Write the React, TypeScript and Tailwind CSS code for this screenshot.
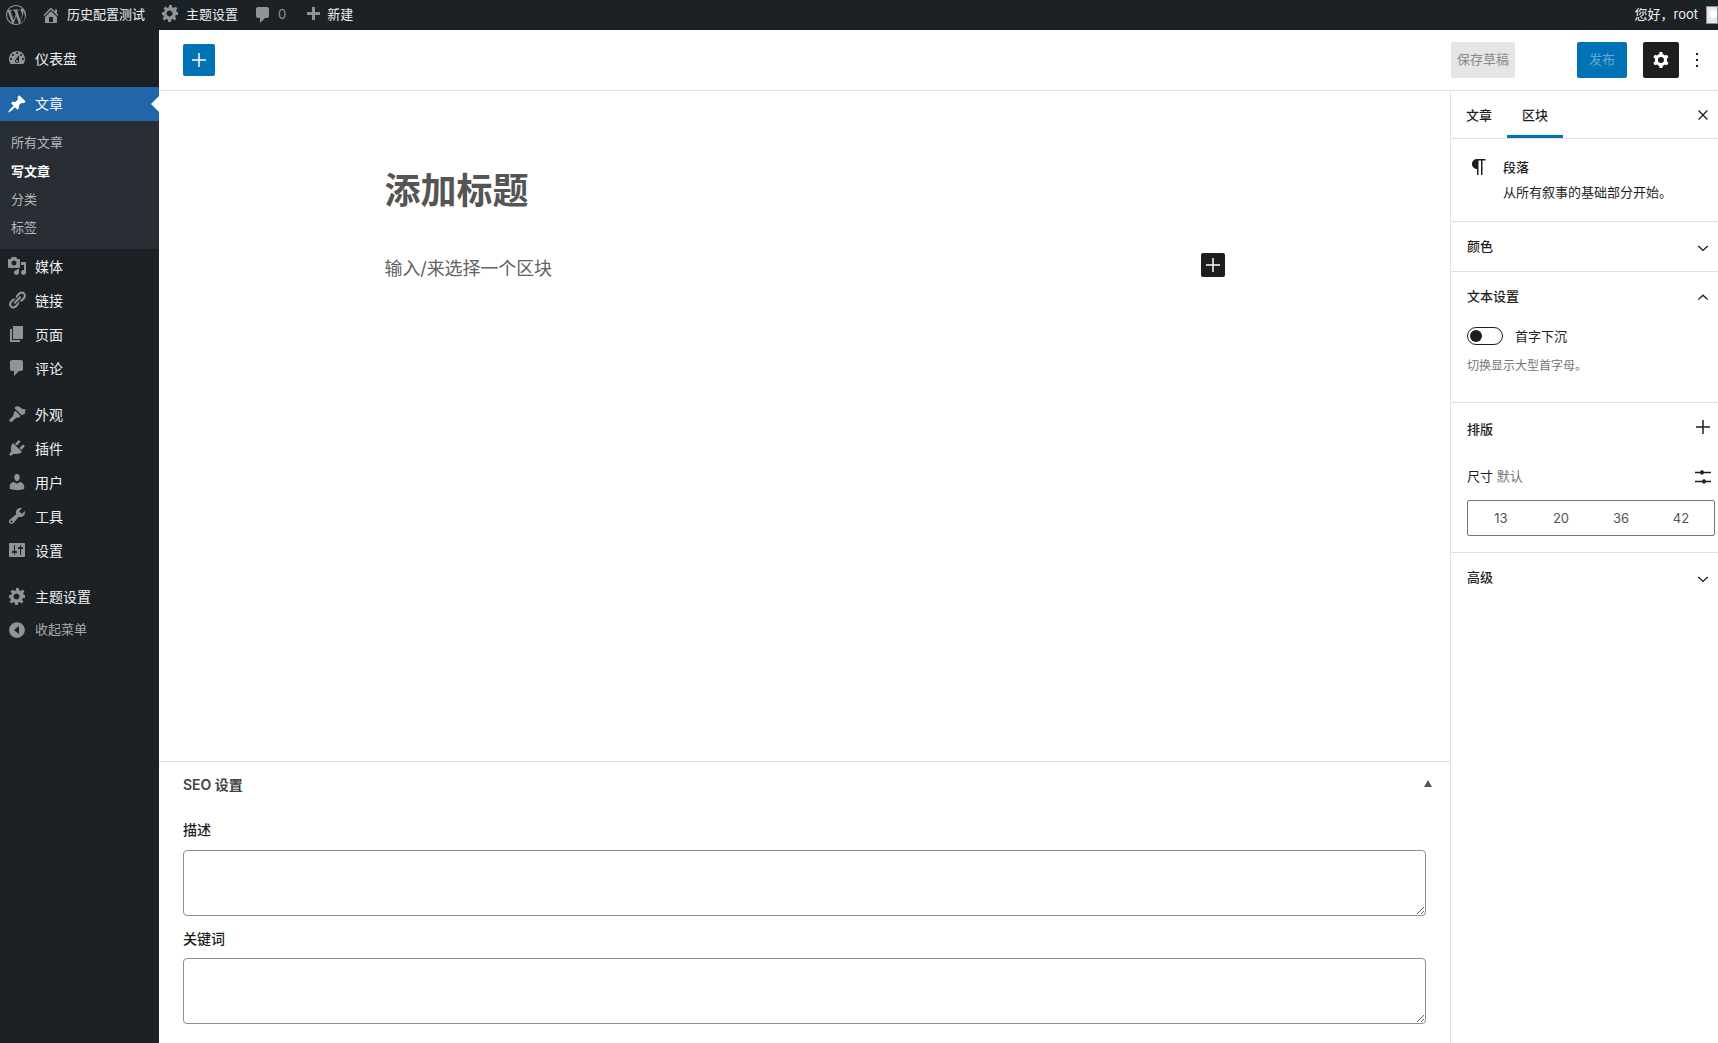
import type { ReactNode } from "react";

const icons = {
  logo: "M20 10c0-5.51-4.49-10-10-10C4.48 0 0 4.49 0 10c0 5.52 4.48 10 10 10 5.51 0 10-4.48 10-10zM7.78 15.37L4.37 6.22c.55-.02 1.17-.08 1.17-.08.5-.06.44-1.13-.06-1.11 0 0-1.45.11-2.37.11-.18 0-.37 0-.58-.01C4.12 2.69 6.89 1.05 10 1.05c2.32 0 4.43.89 6.02 2.34-.02 0-.04-.01-.06-.01-.89 0-1.51.77-1.51 1.59 0 .74.43 1.36.89 2.1.35.61.72 1.38.72 2.51 0 .77-.3 1.66-.68 2.9l-.91 3.05-3.3-9.81c.55-.02 1-.08 1-.08.5-.06.44-1.13-.06-1.1 0 0-1.5.11-2.41.11-.85 0-2.28-.11-2.28-.11-.5-.03-.56 1.07-.06 1.1l1 .08 1.37 3.68-1.93 5.76zm6.27 2.16l2.58-7.11c.54-1.4.73-2.53.73-3.53 0-.36-.02-.7-.08-1.03.97 1.77 1.52 3.79 1.52 5.94 0 3.3-1.9 6.2-4.75 5.73zM6.14 17.92c-3-1.38-5.09-4.41-5.09-7.92 0-1.29.28-2.51.78-3.62zm4.02-6.89l2.66 7.28c.1.02.7.07.14.11-.9.31-1.86.48-2.86.48-.84 0-1.65-.12-2.42-.34z",
  home: "M16 8.5l1.53 1.53-1.06 1.06L10 4.62l-6.47 6.47-1.06-1.06L10 2.5l4 4v-2h2v4zm-6-2.46l6 5.99V18H4v-5.97zM12 17v-5H8v5h4z",
  gear: "M18 12h-2.18c-.17.7-.44 1.35-.81 1.93l1.54 1.54-2.1 2.1-1.54-1.54c-.58.36-1.23.64-1.91.81V19H8v-2.18c-.68-.17-1.33-.45-1.91-.81l-1.54 1.54-2.12-2.12 1.54-1.54c-.36-.58-.63-1.23-.8-1.89H2V9h2.17c.17-.7.44-1.35.8-1.93L3.43 5.53l2.1-2.1 1.54 1.54c.58-.36 1.23-.63 1.93-.8V2h3v2.18c.68.17 1.33.44 1.91.8l1.54-1.54 2.12 2.12-1.54 1.54c.36.58.63 1.23.8 1.9H18V12zm-8.5 1.5c1.66 0 3-1.34 3-3s-1.34-3-3-3-3 1.34-3 3 1.34 3 3 3z",
  comment: "M5 2h9c1.1 0 2 .9 2 2v7c0 1.1-.9 2-2 2h-2l-5 5v-5H5c-1.1 0-2-.9-2-2V4c0-1.1.9-2 2-2z",
  plus: "M17 7v3h-5v5H9v-5H4V7h5V2h3v5h5z",
  dashboard: "M3.76 16h12.48c1.1-1.37 1.76-3.11 1.76-5 0-4.42-3.58-8-8-8s-8 3.58-8 8c0 1.89.66 3.63 1.76 5zM10 4c.55 0 1 .45 1 1s-.45 1-1 1-1-.45-1-1 .45-1 1-1zM6 6c.55 0 1 .45 1 1s-.45 1-1 1-1-.45-1-1 .45-1 1-1zm8 0c.55 0 1 .45 1 1s-.45 1-1 1-1-.45-1-1 .45-1 1-1zm-5.37 5.55L12 7v6c0 1.1-.9 2-2 2s-2-.9-2-2c0-.57.24-1.08.63-1.45zM4 10c.55 0 1 .45 1 1s-.45 1-1 1-1-.45-1-1 .45-1 1-1zm12 0c.55 0 1 .45 1 1s-.45 1-1 1-1-.45-1-1 .45-1 1-1zm-5 3c0-.55-.45-1-1-1s-1 .45-1 1 .45 1 1 1 1-.45 1-1z",
  pin: "M10.44 3.02l1.82-1.82 6.36 6.35-1.83 1.82c-1.05-.68-2.48-.57-3.41.36l-.75.75c-.92.93-1.04 2.35-.35 3.41l-1.83 1.82-2.41-2.41-2.8 2.79c-.42.42-3.38 2.71-3.8 2.29s1.86-3.39 2.28-3.81l2.79-2.79L4.1 9.36l1.83-1.82c1.05.69 2.48.57 3.4-.36l.75-.75c.93-.92 1.05-2.35.36-3.41z",
  media: "M13 11V4c0-.55-.45-1-1-1h-1.67L9 1H5L3.67 3H2c-.55 0-1 .45-1 1v7c0 .55.45 1 1 1h10c.55 0 1-.45 1-1zM7 4.5c1.38 0 2.5 1.12 2.5 2.5S8.38 9.5 7 9.5 4.5 8.38 4.5 7 5.62 4.5 7 4.5zM14 6h5v10.5c0 1.38-1.12 2.5-2.5 2.5S14 17.88 14 16.5s1.12-2.5 2.5-2.5c.17 0 .34.02.5.05V9h-3V6zm-4 8.05V13h2v3.5c0 1.38-1.12 2.5-2.5 2.5S7 17.88 7 16.5 8.12 14 9.5 14c.17 0 .34.02.5.05z",
  links: "M17.74 2.76c1.68 1.69 1.68 4.41 0 6.1l-1.53 1.52c-1.12 1.12-2.7 1.47-4.14 1.09l2.62-2.61.76-.77.76-.76c.84-.84.84-2.2 0-3.04-.84-.85-2.2-.85-3.04 0l-.77.76-3.38 3.38c-.37-1.44-.02-3.02 1.1-4.14l1.52-1.53c1.69-1.68 4.42-1.68 6.1 0zM8.59 13.43l5.34-5.34c.42-.42.42-1.1 0-1.52-.44-.43-1.13-.39-1.52 0l-5.34 5.34c-.42.42-.42 1.1 0 1.52.44.43 1.13.39 1.52 0zm-.76 2.29l4.14-4.15c.38 1.44.03 3.02-1.09 4.14l-1.52 1.53c-1.69 1.68-4.41 1.68-6.1 0-1.68-1.68-1.68-4.42 0-6.1l1.53-1.52c1.12-1.12 2.7-1.47 4.14-1.1l-4.14 4.15c-.85.84-.85 2.2 0 3.05.84.84 2.2.84 3.04 0z",
  page: "M6 15V2h10v13H6zm-1 1h8v2H3V5h2v11z",
  brush: "M14.48 11.06L7.41 3.99l1.5-1.5c.5-.56 2.3-.47 3.51.32 1.21.8 1.43 1.28 2.66 2.01 1.23.73 3.42.5 3.42.5s-.3 2.2-.4 3.3c-.1 1-.6 2-1.6 1.9-.8 0-1.8.3-2.5 1zm-.79.83l-1.7 1.7c-.5.5-.9.2-1.7.1-.8 0-2 .7-2.8 1.5l-2.6 2.6c-.4.4-1 .4-1.4 0l-.9-.9c-.4-.4-.4-1 0-1.4l2.6-2.6c.8-.8 1.5-2 1.5-2.8 0-.8-.4-1.2.1-1.7l1.7-1.7z",
  plugin: "M13.11 4.36L9.87 7.6 8 5.73l3.24-3.24c.35-.34 1.05-.2 1.56.32.52.51.66 1.21.31 1.55zm-8 1.77l.91-1.12 9.01 9.01-1.19.84c-.71.71-2.63 1.16-3.82 1.16H6.14L4.9 17.26c-.59.59-1.54.59-2.12 0-.59-.58-.59-1.53 0-2.12l1.24-1.24v-3.88c0-1.13.4-3.05 1.09-3.89zm7.26 3.97l3.24-3.24c.34-.35 1.04-.21 1.55.31.52.51.66 1.21.31 1.55l-3.24 3.25z",
  users: "M10 9.25c-2.27 0-2.73-3.44-2.73-3.44C7 4.02 7.82 2 9.97 2c2.16 0 2.98 2.02 2.71 3.81 0 0-.41 3.44-2.68 3.44zm0 2.57L12.72 10c2.39 0 4.52 2.33 4.52 4.53v2.49s-3.65 1.13-7.24 1.13c-3.65 0-7.24-1.13-7.24-1.13v-2.49c0-2.25 1.94-4.48 4.15-4.48z",
  tools: "M16.68 9.77c-1.34 1.34-3.3 1.67-4.95.99l-5.41 6.52c-.99.99-2.59.99-3.58 0s-.99-2.59 0-3.57l6.52-5.42c-.68-1.65-.35-3.61.99-4.95 1.28-1.28 3.12-1.62 4.72-1.06l-2.89 2.89 2.82 2.82 2.86-2.87c.53 1.58.18 3.4-1.08 4.65zM3.81 16.21c.4.39 1.04.39 1.43 0 .4-.4.4-1.04 0-1.43-.39-.4-1.03-.4-1.43 0-.39.39-.39 1.03 0 1.43z",
  settings: "M18 16V4c0-.55-.45-1-1-1H3c-.55 0-1 .45-1 1v12c0 .55.45 1 1 1h14c.55 0 1-.45 1-1zM8 11h1c.55 0 1 .45 1 1s-.45 1-1 1H8v1.5c0 .28-.22.5-.5.5s-.5-.22-.5-.5V13H6c-.55 0-1-.45-1-1s.45-1 1-1h1V5.5c0-.28.22-.5.5-.5s.5.22.5.5V11zm5-2h-1c-.55 0-1-.45-1-1s.45-1 1-1h1V5.5c0-.28.22-.5.5-.5s.5.22.5.5V7h1c.55 0 1 .45 1 1s-.45 1-1 1h-1v5.5c0 .28-.22.5-.5.5s-.5-.22-.5-.5V9z",
  collapse: "M10 2.16c4.33 0 7.84 3.51 7.84 7.84s-3.51 7.84-7.84 7.84S2.16 14.33 2.16 10 5.67 2.16 10 2.16zM12 14V6l-5 4z",
};

function Dash({ d, className }: { d: string; className: string }) {
  return (
    <svg viewBox="0 0 20 20" className={className} fill="currentColor" fillRule="evenodd">
      <path d={d} />
    </svg>
  );
}

function MenuItem({ icon, label, muted }: { icon: string; label: string; muted?: boolean }) {
  return (
    <div className="flex h-[34px] items-center">
      <Dash d={icon} className="ml-[7px] h-5 w-5 shrink-0 text-[#8f9498]" />
      <span className={muted ? "ml-2 text-[13px] text-[#a7aaad]" : "ml-2 text-[14px] text-[#f0f0f1]"}>{label}</span>
    </div>
  );
}

function Chevron({ up }: { up?: boolean }) {
  return (
    <svg viewBox="0 0 24 24" className="h-6 w-6" fill="currentColor">
      <path d={up ? "M6.8 14.2l.9.9 4.300-3.900 4.300 3.900.9-.9L12 9.300z" : "M17.200 11.400L12 16.200l-5.200-4.800.9-.9 4.300 3.900 4.300-3.900z"} />
    </svg>
  );
}

function PanelHead({ title, up }: { title: string; up?: boolean }) {
  return (
    <div className="flex h-[49px] items-center justify-between pl-4 pr-[3px]">
      <span className="mt-px text-[13px] font-medium text-[#1e1e1e]">{title}</span>
      <Chevron up={up} />
    </div>
  );
}

function Section({ children }: { children: ReactNode }) {
  return <section className="border-b border-[#e0e0e0]">{children}</section>;
}

function AdminBar() {
  return (
    <header className="flex h-[30px] items-center bg-[#1b2125] text-[13px] text-[#f0f0f1]">
      <Dash d={icons.logo} className="ml-[6px] h-5 w-5 text-[#8f9498]" />
      <Dash d={icons.home} className="ml-[15px] h-5 w-5 text-[#8f9498]" />
      <span className="ml-[6px]">历史配置测试</span>
      <Dash d={icons.gear} className="ml-[15px] -mt-[4px] h-5 w-5 text-[#8f9498]" />
      <span className="ml-[6px]">主题设置</span>
      <Dash d={icons.comment} className="ml-[15px] h-5 w-5 text-[#8f9498]" />
      <span className="ml-[5px] text-[#8f9498]">0</span>
      <Dash d={icons.plus} className="ml-[17px] h-5 w-5 text-[#8f9498]" />
      <span className="ml-[4px]">新建</span>
      <span className="ml-auto">您好，root</span>
      <div className="ml-2 flex h-[18px] w-3 items-start overflow-hidden border border-[#8c8f94] bg-[#e8e8e8]">
        <div className="ml-[3px] mt-[3px] h-2 w-2 rounded-full bg-white" />
      </div>
    </header>
  );
}

function SideMenu() {
  return (
    <aside className="flex w-[159px] shrink-0 flex-col bg-[#1b2125] pt-[11px]">
      <MenuItem icon={icons.dashboard} label="仪表盘" />
      <div className="relative mt-3 flex h-[34px] items-center bg-[#2066a8]">
        <Dash d={icons.pin} className="ml-[7px] h-5 w-5 text-white" />
        <span className="-mt-px ml-2 text-[14px] text-white">文章</span>
        <div className="absolute right-0 top-[9px] border-y-8 border-r-8 border-y-transparent border-r-white" />
      </div>
      <div className="flex h-32 flex-col justify-center bg-[#282e33] pl-[11px] text-[13px] leading-[28.300px] text-[#b4b9be]">
        <span>所有文章</span>
        <span className="font-semibold text-white">写文章</span>
        <span>分类</span>
        <span>标签</span>
      </div>
      <MenuItem icon={icons.media} label="媒体" />
      <MenuItem icon={icons.links} label="链接" />
      <MenuItem icon={icons.page} label="页面" />
      <MenuItem icon={icons.comment} label="评论" />
      <div className="h-3" />
      <MenuItem icon={icons.brush} label="外观" />
      <MenuItem icon={icons.plugin} label="插件" />
      <MenuItem icon={icons.users} label="用户" />
      <MenuItem icon={icons.tools} label="工具" />
      <MenuItem icon={icons.settings} label="设置" />
      <div className="h-3" />
      <MenuItem icon={icons.gear} label="主题设置" />
      <MenuItem icon={icons.collapse} label="收起菜单" muted />
    </aside>
  );
}

function EditorHeader() {
  return (
    <div className="flex h-[61px] shrink-0 items-center border-b border-[#e0e0e0] bg-white pb-[1px]">
      <button className="ml-6 flex h-8 w-8 items-center justify-center rounded-[2px] bg-[#0072b6] text-white">
        <svg viewBox="0 0 24 24" className="h-6 w-6" fill="currentColor">
          <path d="M11.250 5h1.500v6.250H19v1.500h-6.250V19h-1.500v-6.250H5v-1.500h6.250z" />
        </svg>
      </button>
      <button className="ml-auto h-9 w-16 rounded-[2px] bg-[#e5e5e5] text-[13px] text-[#8a8a8a]">保存草稿</button>
      <button className="ml-[62px] h-9 w-[50px] rounded-[2px] bg-[#0072b6] text-[13px] text-[#66a8d3]">发布</button>
      <button className="ml-4 flex h-9 w-9 items-center justify-center rounded-[2px] bg-[#1e1e1e] text-white">
        <svg viewBox="0 0 24 24" className="h-6 w-6" fill="currentColor" fillRule="evenodd">
          <path d="M10.289 4.836A1 1 0 0 1 11.275 4h1.306a1 1 0 0 1 .987.836l.244 1.466c.787.26 1.503.679 2.108 1.218l1.393-.522a1 1 0 0 1 1.216.437l.653 1.13a1 1 0 0 1-.23 1.273l-1.148.944a6.025 6.025 0 0 1 0 2.435l1.149.946a1 1 0 0 1 .23 1.272l-.653 1.13a1 1 0 0 1-1.216.437l-1.394-.522c-.605.54-1.32.958-2.108 1.218l-.244 1.466a1 1 0 0 1-.987.836h-1.306a1 1 0 0 1-.986-.836l-.244-1.466a5.995 5.995 0 0 1-2.108-1.218l-1.394.522a1 1 0 0 1-1.217-.436l-.653-1.131a1 1 0 0 1 .23-1.272l1.149-.946a6.026 6.026 0 0 1 0-2.435l-1.148-.944a1 1 0 0 1-.23-1.272l.653-1.131a1 1 0 0 1 1.217-.437l1.393.522a5.994 5.994 0 0 1 2.108-1.218l.244-1.466zM14.929 12a3 3 0 1 1-6 0 3 3 0 0 1 6 0z" />
        </svg>
      </button>
      <svg viewBox="0 0 24 24" className="ml-[6px] mr-[9px] h-6 w-6 text-[#1e1e1e]" fill="currentColor">
        <path d="M13 19h-2v-2h2v2zm0-6h-2v-2h2v2zm0-6h-2V5h2v2z" />
      </svg>
    </div>
  );
}

function Canvas() {
  return (
    <div className="flex-1 bg-white">
      <div className="mx-auto w-[840px] pt-[75px]">
        <h1 className="text-[36px] font-bold leading-[50px] text-[#555]">添加标题</h1>
        <div className="mt-[37px] flex items-start justify-between">
          <p className="mt-[2px] text-[18px] leading-7 tracking-[-0.1px] text-[#626262]">输入/来选择一个区块</p>
          <button className="flex h-6 w-6 items-center justify-center rounded-[2px] bg-[#1e1e1e] text-white">
            <svg viewBox="0 0 24 24" className="h-6 w-6" fill="currentColor">
              <path d="M11.250 5h1.500v6.250H19v1.500h-6.250V19h-1.500v-6.250H5v-1.500h6.250z" />
            </svg>
          </button>
        </div>
      </div>
    </div>
  );
}

function SeoPanel() {
  return (
    <div className="h-[282px] shrink-0 border-t border-[#e0e0e0] bg-white px-6">
      <div className="flex h-11 items-center justify-between">
        <span className="text-[14px] font-semibold text-[#3c434a]">SEO 设置</span>
        <div className="-mr-[6px] -mt-px h-0 w-0 border-x-4 border-b-[7px] border-x-transparent border-b-[#50575e]" />
      </div>
      <label className="mt-[14px] block text-[14px] font-medium leading-5 text-[#1e1e1e]">描述</label>
      <textarea className="mt-[10px] block h-[66px] w-full rounded-[4px] border border-[#8c8f94] bg-white" />
      <label className="mt-[13px] block text-[14px] font-medium leading-5 text-[#1e1e1e]">关键词</label>
      <textarea className="mt-[9px] block h-[66px] w-full rounded-[4px] border border-[#8c8f94] bg-white" />
    </div>
  );
}

function Inspector() {
  return (
    <aside className="w-[268px] shrink-0 border-l border-[#e0e0e0] bg-white text-[#1e1e1e]">
      <div className="flex h-[48px] items-stretch border-b border-[#e0e0e0] text-[13px] font-medium">
        <div className="flex w-[56px] items-center justify-center pt-[2px]">文章</div>
        <div className="flex w-[56px] items-center justify-center border-b-[3px] border-[#0072b6] pt-[5px]">区块</div>
        <div className="ml-auto flex items-center pr-[3px]">
          <svg viewBox="0 0 24 24" className="h-6 w-6" fill="currentColor">
            <path d="M12.900 12l4-4-.9-.9-4 4-4-4-.9.9 4 4-4 4 .9.9 4-4 4 4 .9-.9z" />
          </svg>
        </div>
      </div>
      <Section>
        <div className="flex h-[82px] pl-4 pt-[16px]">
          <svg viewBox="0 0 24 24" className="h-6 w-6 shrink-0" fill="currentColor">
            <path d="m9.99609 14v-.2251l.00391.0001v6.225h1.5v-14.5h2.5v14.5h1.5v-14.5h3v-1.500h-8.50391c-2.76142 0-5 2.23858-5 5 0 2.7614 2.23858 5 5 5z" />
          </svg>
          <div className="ml-3 text-[13px]">
            <div className="font-medium leading-6">段落</div>
            <div className="mt-[1px] leading-6">从所有叙事的基础部分开始。</div>
          </div>
        </div>
      </Section>
      <Section>
        <PanelHead title="颜色" />
      </Section>
      <Section>
        <PanelHead title="文本设置" up />
        <div className="flex h-[81px] flex-col pl-4">
          <div className="flex items-center pt-[5px]">
            <div className="flex h-[18px] w-9 items-center rounded-full border border-[#1e1e1e] pl-[2px]">
              <div className="h-3 w-3 rounded-full bg-[#1e1e1e]" />
            </div>
            <span className="ml-3 text-[13px] leading-5">首字下沉</span>
          </div>
          <p className="mt-[10px] text-[12px] leading-5 text-[#757575]">切换显示大型首字母。</p>
        </div>
      </Section>
      <Section>
        <div className="flex h-[50px] items-center justify-between pl-4 pr-[3px] pt-[4px]">
          <span className="text-[13px] font-medium">排版</span>
          <svg viewBox="0 0 24 24" className="-mt-[7px] h-6 w-6" fill="currentColor">
            <path d="M11.250 5h1.500v6.250H19v1.500h-6.250V19h-1.500v-6.250H5v-1.500h6.250z" />
          </svg>
        </div>
        <div className="flex h-[42px] items-center justify-between pl-4 pr-[3px] pt-[5px] text-[13px]">
          <span className="mt-px">
            尺寸 <span className="text-[#757575]">默认</span>
          </span>
          <svg viewBox="0 0 24 24" className="h-6 w-6" fill="currentColor">
            <path d="M4 8.250h5.100a2 2 0 0 0 3.800 0H20v-1.500h-7.100a2 2 0 0 0-3.800 0H4zM4 17.250h7.100a2 2 0 0 0 3.800 0H20v-1.500h-5.100a2 2 0 0 0-3.800 0H4z" />
          </svg>
        </div>
        <div className="mb-[16px] ml-4 mt-[5px] grid h-9 w-[248px] grid-cols-4 items-center rounded-[2px] border border-[#757575] px-[3px] pt-px text-center text-[13px] text-[#555]">
          <span>13</span>
          <span>20</span>
          <span>36</span>
          <span>42</span>
        </div>
      </Section>
      <PanelHead title="高级" />
    </aside>
  );
}

export default function App() {
  return (
    <div className="flex h-[1043px] flex-col overflow-hidden bg-white font-['Inter','Noto_Sans_CJK_SC',sans-serif]">
      <AdminBar />
      <div className="flex min-h-0 flex-1">
        <SideMenu />
        <main className="flex min-w-0 flex-1 flex-col">
          <EditorHeader />
          <div className="flex min-h-0 flex-1">
            <div className="flex min-w-0 flex-1 flex-col">
              <Canvas />
              <SeoPanel />
            </div>
            <Inspector />
          </div>
        </main>
      </div>
    </div>
  );
}
